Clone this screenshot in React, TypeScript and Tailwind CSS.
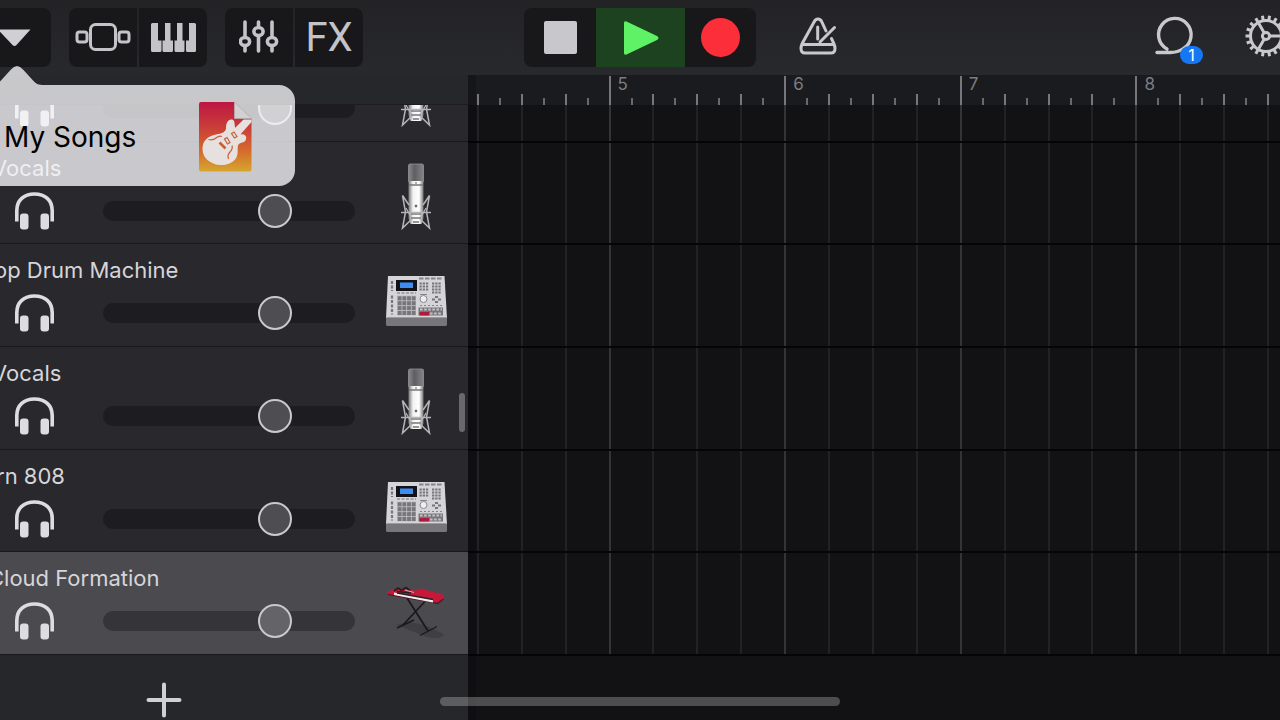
import React, { useState } from "react";
import clsx from "clsx";

type Instrument = "mic" | "drums" | "keys";

interface Track {
  id: number;
  name: string;
  indent: string;
  instrument: Instrument;
  volume: number;
}

const TRACKS: Track[] = [
  { id: 1, name: "", indent: "", instrument: "mic", volume: 71 },
  { id: 2, name: "Vocals", indent: "-ml-2", instrument: "mic", volume: 71 },
  { id: 3, name: "op Drum Machine", indent: "-ml-1.5", instrument: "drums", volume: 71 },
  { id: 4, name: "Vocals", indent: "-ml-2", instrument: "mic", volume: 71 },
  { id: 5, name: "rn 808", indent: "-ml-1", instrument: "drums", volume: 71 },
  { id: 6, name: "Cloud Formation", indent: "-ml-3", instrument: "keys", volume: 71 },
];

const BARS = [4, 5, 6, 7, 8, 9, 10, 11, 12, 13];
const BEATS = [0, 1, 2, 3];

function TracksViewIcon() {
  return (
    <svg width="56" height="30" viewBox="0 0 56 30" fill="none" stroke="#c4c3c7" strokeWidth="3">
      <rect x="15.5" y="2.5" width="25" height="25" rx="5" />
      <rect x="2" y="10" width="10" height="10" rx="2.5" />
      <rect x="44" y="10" width="10" height="10" rx="2.5" />
    </svg>
  );
}

function KeyboardIcon() {
  return (
    <svg width="45" height="30" viewBox="0 0 45 30" fill="#c4c3c7">
      <path d="M1.5 0H7v17.5h3.5V27.5a1.5 1.5 0 0 1-1.5 1.5H1.5A1.5 1.5 0 0 1 0 27.5V1.5A1.5 1.5 0 0 1 1.5 0z" />
      <path d="M14 0h5.5v17.5h2.5V27.5a1.5 1.5 0 0 1-1.5 1.5h-7.5a1.5 1.5 0 0 1-1.5-1.5V17.5H14z" />
      <path d="M26 0h5.5v17.5h2V27.5a1.5 1.5 0 0 1-1.5 1.5h-7a1.5 1.5 0 0 1-1.5-1.5V17.5H26z" />
      <path d="M38 0h5.5A1.5 1.5 0 0 1 45 1.5V27.5a1.5 1.5 0 0 1-1.5 1.5h-7a1.5 1.5 0 0 1-1.5-1.5V17.5h3z" />
    </svg>
  );
}

function FadersIcon() {
  return (
    <svg width="40" height="34" viewBox="0 0 40 34" fill="none" stroke="#c4c3c7" strokeWidth="3.6" strokeLinecap="round">
      <path d="M6 2v14M6 26.5V31M19.500 2v4M19.500 17v14M33 2v14M33 26.5V31" />
      <ellipse cx="6" cy="21.5" rx="4.6" ry="4" />
      <ellipse cx="19.500" cy="11.5" rx="4.6" ry="4" />
      <ellipse cx="33" cy="21.5" rx="4.6" ry="4" />
    </svg>
  );
}

function MetronomeIcon() {
  return (
    <svg width="38" height="38" viewBox="0 0 38 38" fill="none" stroke="#c9c8cc" strokeWidth="3" strokeLinecap="round" strokeLinejoin="round">
      <path d="M27 14 22.800 4.800Q21.600 2 19 2t-3.800 2.800L3.200 26.500Q2 29 2 31.500 2 36 6 36h26q4 0 4-4.500 0-2.500-1.200-5L32.500 21.500" />
      <path d="M4 27.500h30M18.700 10v12M21 25 35.500 10.500" />
    </svg>
  );
}

function LoopIcon() {
  return (
    <svg width="40" height="40" viewBox="0 0 40 40" fill="none" stroke="#c9c8cc" strokeWidth="3.4" strokeLinecap="round">
      <path d="M12 33A16.300 16.300 0 1 1 28.500 32.500Q23 36.500 15 36.500H2" />
    </svg>
  );
}

function GearIcon() {
  const teeth = Array.from({ length: 18 }, (_, i) => i * 20 + 10);
  return (
    <svg width="42" height="42" viewBox="0 0 42 42" fill="none" stroke="#c9c8cc" strokeWidth="3">
      <circle cx="21" cy="21" r="15.5" />
      <circle cx="21" cy="21" r="3.600" />
      <path d="M25 21h11M19 17.500 13.200 7.500M19 24.500 13.200 34.500" />
      {teeth.map((angle) => (
        <path key={angle} d="M21 0.500v5" transform={`rotate(${angle} 21 21)`} />
      ))}
    </svg>
  );
}

function HeadphonesIcon() {
  return (
    <svg width="40" height="38" viewBox="0 0 40 38">
      <path d="M1.800 29.500V18.500C1.800 8 9 2 19.500 2s17.700 6 17.700 16.500v11" fill="none" stroke="#dddce0" strokeWidth="3.6" />
      <rect x="5" y="21.500" width="8.500" height="16" rx="3" fill="#dddce0" />
      <rect x="25.500" y="21.500" width="8.500" height="16" rx="3" fill="#dddce0" />
    </svg>
  );
}

function SongFileIcon() {
  return (
    <svg width="53" height="70" viewBox="0 0 53 70">
      <defs>
        <linearGradient id="songFile" x1="0" y1="0" x2="0" y2="1">
          <stop offset="0" stopColor="#bd1742" />
          <stop offset="0.35" stopColor="#c93c39" />
          <stop offset="0.7" stopColor="#d56a2d" />
          <stop offset="1" stopColor="#d6a62e" />
        </linearGradient>
      </defs>
      <path d="M2 0h33.500v16.500H52.500V67.500a2 2 0 0 1-2 2H2a2 2 0 0 1-2-2V2a2 2 0 0 1 2-2z" fill="url(#songFile)" />
      <path d="M35.500 0v16.500H52.500z" fill="#d3d0d1" stroke="#a9a5a7" strokeWidth="0.6" />
      <g fill="#e6e0df">
        <path d="M44.500 17.500H52.500V20L40 34 33 29z" />
        <path d="M3.500 47C3.500 38.500 9 34 17 32.500 23 31.500 27 30 27 26 27 20 29.500 17.500 33 17.500 36.500 18 35 23.500 36.500 26.500L42 32.500C46 31.500 48.500 35 46.500 38.500 44.500 41.500 40 40 39 43.500 38 47 40 52 36.500 57 33.500 61 27 63.500 20.500 63 11 62 3.500 56 3.500 47z" />
      </g>
      <g fill="none" stroke="#c95f37" strokeWidth="1.2">
        <path d="M9.500 37.500q4.500 1 7.500-1.500t6-1.500M29.500 57q-1.500-4 1.500-7t2-6.500M25.500 37l2.500-1.500 3 5-2.500 1.500zM32.500 31.500l2.500-1.500 3 4.500-2.500 1.500z" />
        <path d="M20.500 40.500l6 6" strokeWidth="2.6" />
      </g>
    </svg>
  );
}

function MicIcon() {
  return (
    <svg width="64" height="70" viewBox="0 0 64 70">
      <defs>
        <linearGradient id="micBody" x1="0" y1="0" x2="1" y2="0">
          <stop offset="0" stopColor="#77767a" />
          <stop offset="0.3" stopColor="#f2f2f2" />
          <stop offset="0.7" stopColor="#ffffff" />
          <stop offset="1" stopColor="#77767a" />
        </linearGradient>
        <linearGradient id="micGrille" x1="0" y1="0" x2="1" y2="0">
          <stop offset="0" stopColor="#89898b" />
          <stop offset="0.4" stopColor="#5f5f61" />
          <stop offset="1" stopColor="#858587" />
        </linearGradient>
      </defs>
      <rect x="24.5" y="2" width="15" height="18.5" rx="1.5" fill="url(#micGrille)" stroke="#929294" strokeWidth="0.8" />
      <path d="M24.500 19h15V56l-2 6H26.500l-2-6z" fill="url(#micBody)" />
      <path d="M25 23h14M27 52h10M27 56h10M29 60h6" stroke="#77777a" strokeWidth="1.3" />
      <path d="M31 43l2 2m0-2-2 2M31 21h2" stroke="#66666a" strokeWidth="1.2" />
      <g fill="none" stroke="#b5b5b7" strokeWidth="1.5">
        <path d="M25 43 18.500 33.500 21.500 50 18.500 66 28 57M39 43l6.500-9.500L42.500 50l3 16L36 57" />
        <path d="M17 50.500h30M22 46l5 9M42 46l-5 9" strokeWidth="1.3" />
      </g>
    </svg>
  );
}

function DrumMachineIcon() {
  const four = [0, 1, 2, 3];
  return (
    <svg width="64" height="70" viewBox="0 0 64 70">
      <path d="M2 54h61v6.500a1.500 1.500 0 0 1-1.500 1.500h-58A1.500 1.500 0 0 1 2 60.500z" fill="#77767a" />
      <path d="M4 12h56.500L63 54H2z" fill="#d5d4d6" />
      <path d="M2.500 53.500h60" stroke="#9b9a9d" />
      <rect x="12" y="16" width="21" height="11" fill="#111319" />
      <rect x="16" y="18.5" width="13" height="5.5" fill="#3e8df0" />
      <path d="M8 17v10M8 31.500v19" stroke="#77767b" strokeWidth="2.2" strokeDasharray="3 1.5" />
      <path d="M13 29h19" stroke="#929195" strokeWidth="1.5" strokeDasharray="3 1.5" />
      <rect x="13" y="31.5" width="19" height="20" fill="#bbbabd" />
      {four.map((row) =>
        four.map((col) => (
          <rect key={`${row}-${col}`} x={13.7 + col * 4.7} y={32.3 + row * 4.9} width="3.8" height="4" fill="#77767a" />
        )),
      )}
      <path d="M35 14.500h24" stroke="#85848a" strokeWidth="2" strokeDasharray="4.5 1.5" />
      <path d="M35.500 19.500h9M35.500 22.500h9M35.500 25.500h9M48 19.500h9M48 22.500h9M48 25.500h9M48 28.500h9" stroke="#77767b" strokeWidth="2" strokeDasharray="2.3 0.9" />
      <circle cx="39.5" cy="35" r="3.5" fill="#eeeeef" stroke="#8b8a8e" />
      <path d="M36 30.500h7" stroke="#85848a" />
      <path d="M48 35.500h3M54 35.500h3M51 33h3M51 38h3" stroke="#77767b" strokeWidth="2" />
      <path d="M36 41.500h23" stroke="#85848a" strokeDasharray="2 2" />
      <rect x="34.5" y="43.5" width="24.5" height="8" fill="#77767b" />
      <rect x="35.5" y="48" width="9.5" height="3.5" fill="#ad1b40" />
      <path d="M36 45.500h22M46 49.500h12" stroke="#c4c3c5" strokeWidth="2.2" strokeDasharray="2.6 1.5" />
    </svg>
  );
}

function KeysIcon() {
  return (
    <svg width="64" height="70" viewBox="0 0 64 70">
      <path d="M12 53q14-5 28 0t20 10q-7 6-22 0T12 53z" fill="#3f3e42" />
      <g fill="none" stroke="#1a191b" strokeWidth="1.8">
        <path d="M23 26 44 59M40.500 30 18.500 53.500" />
        <path d="M13 56l17-8M36 63.500l17-9" strokeWidth="1.4" />
      </g>
      <path d="M3 20.500 9 17l23 1.500L37 16.500l23 6.500-.5 4L53 30.500 3.500 22.500z" fill="#c9173a" />
      <path d="M4 22.500l45 8 4.500 1 6-4.500" fill="none" stroke="#5f0f20" strokeWidth="1.2" />
      <path d="M10 20.500 49 27.500v3L10 23z" fill="#f0eeee" />
      <path d="M13 21 49 27.500" stroke="#242325" strokeWidth="1.6" />
      <path d="M10 19l4-3 4 2.500M18 18l4-2.500 4 3M13 19.500l14 1.500" fill="none" stroke="#2c1a20" strokeWidth="1.6" />
      <path d="M21 18l9 2.500" stroke="#c7b4b9" />
    </svg>
  );
}

const INSTRUMENT_ICONS: Record<Instrument, () => React.JSX.Element> = {
  mic: MicIcon,
  drums: DrumMachineIcon,
  keys: KeysIcon,
};

interface TrackRowProps {
  track: Track;
  selected: boolean;
  onSelect: () => void;
}

function TrackRow({ track, selected, onSelect }: TrackRowProps) {
  const [volume, setVolume] = useState(track.volume);
  const Icon = INSTRUMENT_ICONS[track.instrument];

  return (
    <div
      className={clsx(
        "flex justify-between border-t border-[#19191b] pr-5",
        selected ? "bg-[#4b4a4e]" : "bg-[#29282d]",
      )}
    >
      <div className="pt-3">
        <h2 className={clsx("h-7 text-[22px] leading-7 whitespace-nowrap text-[#d6d5d9]", track.indent)}>
          {track.name}
        </h2>
        <div className="mt-2.5 flex items-center gap-12 pl-[15px]">
          <button type="button" aria-label="Solo">
            <HeadphonesIcon />
          </button>
          <input
            type="range"
            aria-label="Volume"
            min={0}
            max={100}
            value={volume}
            onChange={(e) => setVolume(Number(e.target.value))}
            className={clsx(
              "h-[34px] w-[252px] appearance-none bg-transparent [&::-webkit-slider-runnable-track]:h-5 [&::-webkit-slider-runnable-track]:rounded-full [&::-webkit-slider-thumb]:-mt-[7px] [&::-webkit-slider-thumb]:size-[34px] [&::-webkit-slider-thumb]:appearance-none [&::-webkit-slider-thumb]:rounded-full [&::-webkit-slider-thumb]:border-2 [&::-webkit-slider-thumb]:border-[#c9c8cc]",
              selected
                ? "[&::-webkit-slider-runnable-track]:bg-[#353438] [&::-webkit-slider-thumb]:bg-[#646367]"
                : "[&::-webkit-slider-runnable-track]:bg-[#1d1c20] [&::-webkit-slider-thumb]:bg-[#4e4d51]",
            )}
          />
        </div>
      </div>
      <button type="button" aria-label="Select track" onClick={onSelect} className="mt-5 self-start">
        <Icon />
      </button>
    </div>
  );
}

function Ruler() {
  return (
    <div className="-ml-[35px] grid h-[30px] w-[1756px] shrink-0 grid-cols-10 pt-px">
      {BARS.map((bar) => (
        <div key={bar} className="grid grid-cols-4">
          {BEATS.map((beat) => (
            <div key={beat} className="flex items-end justify-between">
              <div className={clsx("flex w-0.5 bg-[#77777b]", beat === 0 ? "h-full" : "h-[11px]")}>
                {beat === 0 && <span className="pl-[9px] text-[17px] leading-4 text-[#7d7d81]">{bar}</span>}
              </div>
              <div className="h-[7px] w-0.5 bg-[#69696d]" />
              <div className="w-0" />
            </div>
          ))}
        </div>
      ))}
    </div>
  );
}

function Timeline() {
  return (
    <section className="relative flex min-w-0 flex-1 flex-col overflow-hidden bg-[#121214]">
      <div className="flex flex-col bg-[#1a1b1f]">
        <Ruler />
      </div>
      <div className="grid h-[551px] overflow-hidden">
        <div className="col-start-1 row-start-1 -ml-[35px] grid w-[1756px] grid-cols-10">
          {BARS.map((bar) => (
            <div key={bar} className="grid grid-cols-4">
              {BEATS.map((beat) => (
                <div
                  key={beat}
                  className={clsx("border-l-2", beat === 0 ? "border-[#343436]" : "border-[#222224]")}
                />
              ))}
            </div>
          ))}
        </div>
        <div className="col-start-1 row-start-1 flex h-[551px] flex-col justify-end">
          <div className="grid h-[618px] shrink-0 grid-rows-6 border-b-2 border-[#050506]">
            {TRACKS.map((track) => (
              <div key={track.id} className="border-t-2 border-[#050506]" />
            ))}
          </div>
        </div>
      </div>
      <div className="absolute inset-y-0 left-0 w-2 bg-black/15" />
    </section>
  );
}

function TrackList() {
  const [selectedId, setSelectedId] = useState(6);

  return (
    <aside className="relative flex w-[468px] shrink-0 flex-col bg-[#26272b]">
      <div className="h-[30px] shrink-0 border-b border-[#1d1d20]" />
      <div className="flex h-[549px] shrink-0 flex-col justify-end overflow-hidden">
        <div className="grid h-[616px] shrink-0 grid-rows-6">
          {TRACKS.map((track) => (
            <TrackRow
              key={track.id}
              track={track}
              selected={track.id === selectedId}
              onSelect={() => setSelectedId(track.id)}
            />
          ))}
        </div>
      </div>
      <div className="flex justify-center border-t border-[#1a1a1c] pt-[27px] pr-[140px]">
        <button type="button" aria-label="Add track">
          <svg width="36" height="36" viewBox="0 0 36 36" stroke="#d0d0d3" strokeWidth="4" strokeLinecap="round">
            <path d="M18 2.500v31M2.500 18h31" />
          </svg>
        </button>
      </div>
      <div className="absolute top-[318px] right-[3px] h-[39px] w-1.5 rounded-full bg-[#69686c]" />
    </aside>
  );
}

function SongsPopover() {
  return (
    <div className="absolute top-[66px] -left-4 flex w-[311px] flex-col">
      <svg width="60" height="19" viewBox="0 0 60 19" className="ml-[3px]">
        <path d="M6 19Q10 19 13 15.500L24 3.500Q30 -3.500 36 3.500L47 15.500Q50 19 56 19z" fill="#f6f6f9" fillOpacity="0.78" />
      </svg>
      <button
        type="button"
        className="flex h-[101px] items-center justify-between rounded-2xl bg-[#f6f6f9]/78 pt-0.5 pr-[43px] pl-5 text-[28px] text-black"
      >
        My Songs
        <SongFileIcon />
      </button>
    </div>
  );
}

function Header() {
  const [playing, setPlaying] = useState(true);

  return (
    <header className="grid h-[75px] shrink-0 grid-cols-[1fr_auto_1fr] items-center bg-linear-to-b from-[#232326] to-[#28292d]">
      <div className="flex h-[59px] gap-[18px]">
        <button type="button" aria-label="My Songs" className="flex w-[51px] items-center rounded-r-lg bg-[#18181a]">
          <svg width="32" height="18" viewBox="0 0 32 18" fill="#d0cfd3">
            <path d="M-2 0.500H30.500L16.500 16Q14.500 18 12.500 16z" />
          </svg>
        </button>
        <div className="flex gap-0.5 overflow-hidden rounded-lg">
          <button type="button" aria-label="Tracks view" className="flex w-[68px] items-center justify-center bg-[#18181a] pb-0.5">
            <TracksViewIcon />
          </button>
          <button type="button" aria-label="Instrument" className="flex w-[68px] items-center justify-center bg-[#18181a]">
            <KeyboardIcon />
          </button>
        </div>
        <div className="flex gap-0.5 overflow-hidden rounded-lg">
          <button type="button" aria-label="Track controls" className="flex w-[68px] items-center justify-center bg-[#18181a] pb-0.5">
            <FadersIcon />
          </button>
          <button
            type="button"
            className="flex w-[68px] items-center justify-center bg-[#18181a] font-[Roboto,sans-serif] text-[40px] leading-10 text-[#c4c3c7]"
          >
            FX
          </button>
        </div>
      </div>

      <div className="flex h-[59px] overflow-hidden rounded-lg">
        <button type="button" aria-label="Stop" className="flex w-[72px] items-center justify-center bg-[#18181a]">
          <span className="size-[33px] rounded-xs bg-[#c8c7cb]" />
        </button>
        <button
          type="button"
          aria-label="Play"
          onClick={() => setPlaying(!playing)}
          className={clsx("flex w-[89px] items-center justify-center", playing ? "bg-[#1d421f]" : "bg-[#18181a]")}
        >
          <svg width="36" height="36" viewBox="0 0 36 36" fill="#5ff267">
            <path d="M1 3Q1 0.500 3.500 1.500L34 16Q37 18 34 20L3.500 34.500Q1 35.500 1 33z" />
          </svg>
        </button>
        <button type="button" aria-label="Record" className="flex w-[71px] items-center justify-center bg-[#18181a]">
          <span className="size-[39px] rounded-full bg-[#fb2e39]" />
        </button>
      </div>

      <div className="flex h-full items-center justify-between overflow-hidden pb-[3px] pl-[43px]">
        <button type="button" aria-label="Metronome">
          <MetronomeIcon />
        </button>
        <div className="-mr-[7px] flex items-center gap-[50px]">
          <button type="button" aria-label="Loops" className="relative">
            <LoopIcon />
            <span className="absolute -right-2 -bottom-2 flex h-[18px] w-[23px] items-center justify-center rounded-full bg-[#1677f5] text-base leading-4 text-white">
              1
            </span>
          </button>
          <button type="button" aria-label="Settings">
            <GearIcon />
          </button>
        </div>
      </div>
    </header>
  );
}

export default function App() {
  return (
    <div className="relative flex h-screen flex-col overflow-hidden bg-[#26272b] font-[Inter,'Liberation_Sans',sans-serif]">
      <Header />
      <main className="flex min-h-0 flex-1">
        <TrackList />
        <Timeline />
      </main>
      <SongsPopover />
      <div className="absolute bottom-[14px] left-1/2 h-[9px] w-[400px] -translate-x-1/2 rounded-full bg-white/25" />
    </div>
  );
}
